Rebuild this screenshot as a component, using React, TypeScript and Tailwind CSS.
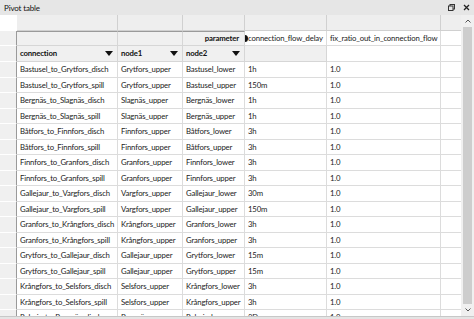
import React from "react";

// ─── Data ──────────────────────────────────────────────

const ROWS: [string, string, string, string, string][] = [
  ["Bastusel_to_Grytfors_disch", "Grytfors_upper", "Bastusel_lower", "1h", "1.0"],
  ["Bastusel_to_Grytfors_spill", "Grytfors_upper", "Bastusel_upper", "150m", "1.0"],
  ["Bergnäs_to_Slagnäs_disch", "Slagnäs_upper", "Bergnäs_lower", "1h", "1.0"],
  ["Bergnäs_to_Slagnäs_spill", "Slagnäs_upper", "Bergnäs_upper", "1h", "1.0"],
  ["Båtfors_to_Finnfors_disch", "Finnfors_upper", "Båtfors_lower", "3h", "1.0"],
  ["Båtfors_to_Finnfors_spill", "Finnfors_upper", "Båtfors_upper", "3h", "1.0"],
  ["Finnfors_to_Granfors_disch", "Granfors_upper", "Finnfors_lower", "3h", "1.0"],
  ["Finnfors_to_Granfors_spill", "Granfors_upper", "Finnfors_upper", "3h", "1.0"],
  ["Gallejaur_to_Vargfors_disch", "Vargfors_upper", "Gallejaur_lower", "30m", "1.0"],
  ["Gallejaur_to_Vargfors_spill", "Vargfors_upper", "Gallejaur_upper", "150m", "1.0"],
  ["Granfors_to_Krångfors_disch", "Krångfors_upper", "Granfors_lower", "3h", "1.0"],
  ["Granfors_to_Krångfors_spill", "Krångfors_upper", "Granfors_upper", "3h", "1.0"],
  ["Grytfors_to_Gallejaur_disch", "Gallejaur_upper", "Grytfors_lower", "15m", "1.0"],
  ["Grytfors_to_Gallejaur_spill", "Gallejaur_upper", "Grytfors_upper", "15m", "1.0"],
  ["Krångfors_to_Selsfors_disch", "Selsfors_upper", "Krångfors_lower", "3h", "1.0"],
  ["Krångfors_to_Selsfors_spill", "Selsfors_upper", "Krångfors_upper", "3h", "1.0"],
  ["Rebnis_to_Bergnäs_disch", "Bergnäs_upper", "Rebnis_lower", "2D", "1.0"],
];

// ─── Bits ──────────────────────────────────────────────

function DownArrow() {
  return (
    <svg width="8" height="5" viewBox="0 0 8 5" className="shrink-0">
      <path d="M0 0h8L4 5z" fill="#111" />
    </svg>
  );
}

function HeaderFilter({ label }: { label: string }) {
  return (
    <div className="flex h-full items-center justify-between border-r border-b border-[#d6d6d6] bg-[#f0f0f0] pl-[3px] pr-[4px] font-bold text-[#111]">
      <span>{label}</span>
      <DownArrow />
    </div>
  );
}

const cell = "h-full overflow-hidden whitespace-nowrap border-r border-b border-[#dcdcdc] pl-[3px] leading-[15px]";

// ─── App ───────────────────────────────────────────────

export default function App() {
  return (
    <div className="flex h-[319px] w-[474px] flex-col overflow-hidden bg-white text-[7.75px] tracking-[-0.15px] text-[#222]" style={{ fontFamily: 'Lato, "Noto Sans", sans-serif' }}>
      {/* Title bar */}
      <div className="flex h-[15px] shrink-0 items-center justify-between bg-[#e6e6e6] pl-[4px] pr-[4px] text-[8px] text-[#111]">
        <span>Pivot table</span>
        <div className="flex items-center gap-[8px]">
          <svg width="7" height="7" viewBox="0 0 7 7">
            <rect x="2" y="0.5" width="4.5" height="4.5" fill="none" stroke="#333" strokeWidth="1" />
            <rect x="0.5" y="2" width="4.5" height="4.5" fill="#e6e6e6" stroke="#333" strokeWidth="1" />
          </svg>
          <svg width="7" height="7" viewBox="0 0 7 7">
            <path d="M1 1l5 5M6 1L1 6" stroke="#222" strokeWidth="1.3" />
          </svg>
        </div>
      </div>

      <div className="flex min-h-0 flex-1">
        {/* Table */}
        <div className="flex min-w-0 flex-1 flex-col">
          {/* horizontal header */}
          <div className="flex h-[16px] shrink-0">
            <div className="w-[17px] bg-white" />
            <div className="w-[101px] border-r border-b border-[#d0d0d0] bg-[#eeeeee]" />
            <div className="w-[65px] border-r border-b border-[#d0d0d0] bg-[#eeeeee]" />
            <div className="w-[62px] border-r border-b border-[#d0d0d0] bg-[#eeeeee]" />
            <div className="w-[82px] border-r border-b border-[#d0d0d0] bg-[#eeeeee]" />
            <div className="w-[114px] border-r border-b border-[#d0d0d0] bg-[#eeeeee]" />
            <div className="flex-1 border-b border-[#d0d0d0] bg-[#eeeeee]" />
          </div>

          {/* pivot header row 1 */}
          <div className="flex h-[15px] shrink-0">
            <div className="w-[17px] border-r border-b border-r-[#9a9a9a] border-b-white bg-[#f0f0f0]" />
            <div className="w-[101px] border-t border-r border-b border-t-[#9a9a9a] border-r-[#d6d6d6] border-b-[#d6d6d6] bg-[#f0f0f0]" />
            <div className="w-[65px] border-t border-r border-b border-t-[#9a9a9a] border-r-[#d6d6d6] border-b-[#d6d6d6] bg-[#f0f0f0]" />
            <div className="flex w-[62px] items-center justify-end border-t border-r border-b border-t-[#9a9a9a] border-r-[#d6d6d6] border-b-[#d6d6d6] bg-[#f0f0f0] pr-[5px] font-bold text-[#111]">
              parameter
            </div>
            <div className={`${cell} relative flex w-[82px] items-center pl-[3px]`}>
              <svg width="3" height="7" viewBox="0 0 3 7" className="absolute left-0 top-[4px]">
                <path d="M0 0a3 3.5 0 0 1 0 7z" fill="#111" />
              </svg>
              connection_flow_delay
            </div>
            <div className={`${cell} w-[114px]`}>fix_ratio_out_in_connection_flow</div>
            <div className="flex-1 border-b border-[#dcdcdc]" />
          </div>

          {/* pivot header row 2 */}
          <div className="flex h-[16px] shrink-0">
            <div className="w-[17px] border-r border-b border-r-[#9a9a9a] border-b-white bg-[#f0f0f0]" />
            <div className="w-[101px]"><HeaderFilter label="connection" /></div>
            <div className="w-[65px]"><HeaderFilter label="node1" /></div>
            <div className="w-[62px]"><HeaderFilter label="node2" /></div>
            <div className="w-[82px] border-r border-b border-[#d6d6d6] bg-[#f0f0f0]" />
            <div className="w-[114px] border-r border-b border-[#dcdcdc]" />
            <div className="flex-1 border-b border-[#dcdcdc]" />
          </div>

          {/* data rows */}
          {ROWS.map((r, i) => (
            <div key={i} className="flex h-[15.5px] shrink-0">
              <div className="w-[17px] border-r border-b border-r-[#9a9a9a] border-b-white bg-[#f0f0f0]" />
              <div className={`${cell} w-[101px]`}>{r[0]}</div>
              <div className={`${cell} w-[65px]`}>{r[1]}</div>
              <div className={`${cell} w-[62px]`}>{r[2]}</div>
              <div className={`${cell} w-[82px]`}>{r[3]}</div>
              <div className={`${cell} w-[114px]`}>{r[4]}</div>
              <div className="flex-1 border-b border-[#dcdcdc]" />
            </div>
          ))}
        </div>

        {/* Vertical scrollbar */}
        <div className="flex w-[13px] shrink-0 flex-col items-center bg-[#f0f0f0]">
          <div className="flex h-[12px] items-center justify-center">
            <svg width="6" height="4" viewBox="0 0 6 4">
              <path d="M0.5 3.5L3 1l2.5 2.5" fill="none" stroke="#555" strokeWidth="1" />
            </svg>
          </div>
          <div className="w-[9px] flex-1 bg-[#cdcdcd]" />
          <div className="flex h-[12px] items-center justify-center">
            <svg width="6" height="4" viewBox="0 0 6 4">
              <path d="M0.5 0.5L3 3l2.5-2.5" fill="none" stroke="#555" strokeWidth="1" />
            </svg>
          </div>
        </div>
      </div>

      {/* bottom edge */}
      <div className="h-[3px] shrink-0 border-t border-[#c8c8c8] bg-[#e4e4e4]" />
    </div>
  );
}
